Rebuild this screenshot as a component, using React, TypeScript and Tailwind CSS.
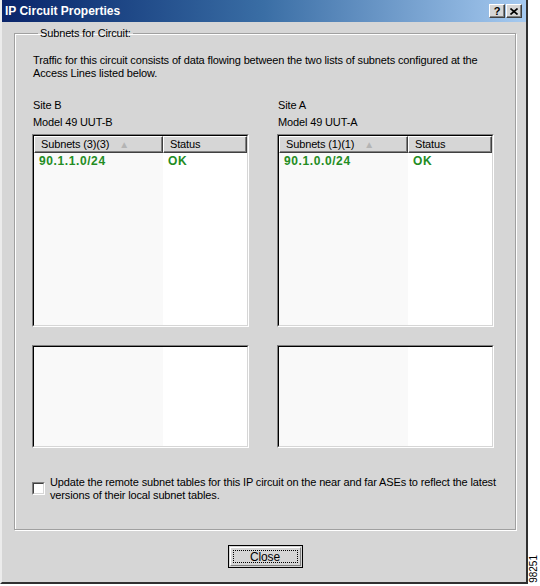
const F = "font-['Liberation_Sans',Arial,sans-serif]";

function TitleButton({ children }: { children: React.ReactNode }) {
  return (
    <div className="flex h-[14px] w-[16px] items-center justify-center border border-t-white border-l-white border-r-[#404040] border-b-[#404040] bg-[#d6d6d6] text-[11px] font-bold leading-none text-black shadow-[inset_-1px_-1px_0_#808080]">
      {children}
    </div>
  );
}

function SunkenBox({ className, children }: { className: string; children?: React.ReactNode }) {
  return (
    <div className={`border border-t-[#808080] border-l-[#808080] border-r-white border-b-white ${className}`}>
      <div className="relative flex h-full flex-col border border-t-black border-l-black border-r-[#d6d6d6] border-b-[#d6d6d6] bg-white">
        {children}
      </div>
    </div>
  );
}

function HeaderCell({ width, children }: { width: string; children: React.ReactNode }) {
  return (
    <div
      className={`flex h-[17px] items-center border border-t-white border-l-white border-r-[#404040] border-b-[#404040] bg-[#d6d6d6] pl-[6px] shadow-[inset_-1px_-1px_0_#808080] ${width}`}
    >
      {children}
    </div>
  );
}

function SubnetList({ label, subnet }: { label: string; subnet: string }) {
  return (
    <SunkenBox className="h-[193px] w-[217px]">
      <div className="absolute inset-0 flex">
        <div className="w-[129px] bg-[#f9f9f9]" />
        <div className="flex-1 bg-white" />
      </div>
      <div className="relative flex">
        <HeaderCell width="w-[129px]">
          <span>{label}</span>
          <span className="ml-[10px] text-[10px] leading-none text-[#b4b4b4]">▲</span>
        </HeaderCell>
        <HeaderCell width="w-[84px]">Status</HeaderCell>
        <div className="flex-1 bg-[#d6d6d6]" />
      </div>
      <div className="relative flex h-[16px] items-center text-[12px] font-bold tracking-[0.6px] text-[#238c23]">
        <span className="w-[129px] pl-[5px]">{subnet}</span>
        <span className="pl-[5px]">OK</span>
      </div>
    </SunkenBox>
  );
}

function EmptyList() {
  return (
    <SunkenBox className="h-[103px] w-[217px]">
      <div className="flex h-full">
        <div className="w-[129px] bg-[#f9f9f9]" />
        <div className="flex-1 bg-white" />
      </div>
    </SunkenBox>
  );
}

function Site({ site, model, label, subnet }: { site: string; model: string; label: string; subnet: string }) {
  return (
    <div className="flex w-[217px] flex-col">
      <div className="h-[13px] pl-[1px] leading-[13px]">{site}</div>
      <div className="mt-[4px] h-[13px] pl-[1px] leading-[13px]">{model}</div>
      <div className="mt-[5px]">
        <SubnetList label={label} subnet={subnet} />
      </div>
      <div className="mt-[18px]">
        <EmptyList />
      </div>
    </div>
  );
}

export default function App() {
  return (
    <div className={`flex h-[586px] w-[540px] bg-white ${F} text-[11px] tracking-[-0.14px] text-black`}>
      <div className="flex h-[584px] w-[528px] flex-col border-l-2 border-r-2 border-b-2 border-l-[#ececec] border-r-[#303030] border-b-[#303030] bg-[#d6d6d6]">
        <div className="flex h-[22px] shrink-0 items-center bg-gradient-to-r from-[#0a246a] via-[#3a6ea5] to-[#a6caf0] pl-[3px] pr-[4px]">
          <span className="text-[12px] font-bold tracking-normal text-white">IP Circuit Properties</span>
          <div className="ml-auto flex gap-[1px]">
            <TitleButton>?</TitleButton>
            <TitleButton>
              <svg width="8" height="7" viewBox="0 0 8 7">
                <path d="M0.5 0.5 L7.5 6.5 M7.5 0.5 L0.5 6.5" stroke="black" strokeWidth="1.6" />
              </svg>
            </TitleButton>
          </div>
        </div>

        <div className="flex flex-1 flex-col pl-[12px] pr-[10px] pt-[5px]">
          <fieldset className="border border-[#a0a0a0] pb-[27px] pl-[17px] pt-[14px] shadow-[inset_1px_1px_0_#fff,1px_1px_0_#fff]">
            <legend className="ml-[6px] px-[2px] leading-[13px]">Subnets for Circuit:</legend>
            <p className="pl-[1px] leading-[13px]">
              Traffic for this circuit consists of data flowing between the two lists of subnets configured at the
              <br />
              Access Lines listed below.
            </p>

            <div className="mt-[19px] flex gap-[28px]">
              <Site site="Site B" model="Model 49 UUT-B" label="Subnets (3)(3)" subnet="90.1.1.0/24" />
              <Site site="Site A" model="Model 49 UUT-A" label="Subnets (1)(1)" subnet="90.1.0.0/24" />
            </div>

            <div className="mt-[28px] flex items-start">
              <div className="mt-[6px] h-[13px] w-[13px] shrink-0 border border-t-[#808080] border-l-[#808080] border-r-white border-b-white">
                <div className="h-full w-full border border-t-[#404040] border-l-[#404040] border-r-[#d6d6d6] border-b-[#d6d6d6] bg-white" />
              </div>
              <p className="ml-[5px] leading-[13px]">
                Update the remote subnet tables for this IP circuit on the near and far ASEs to reflect the latest
                <br />
                versions of their local subnet tables.
              </p>
            </div>
          </fieldset>

          <div className="mt-[15px] flex justify-center">
            <button className="h-[23px] w-[75px] border border-black bg-[#d6d6d6] p-[1px]">
              <div className="h-full w-full border border-t-white border-l-white border-r-[#808080] border-b-[#808080] p-[2px]">
                <div className="flex h-full w-full items-center justify-center border border-dotted border-black text-[12px]">
                  Close
                </div>
              </div>
            </button>
          </div>
        </div>
      </div>

      <div className="flex flex-1 items-end justify-center pb-[3px]">
        <span className="[writing-mode:vertical-rl] rotate-180 text-[10px] leading-none tracking-normal">98251</span>
      </div>
    </div>
  );
}
